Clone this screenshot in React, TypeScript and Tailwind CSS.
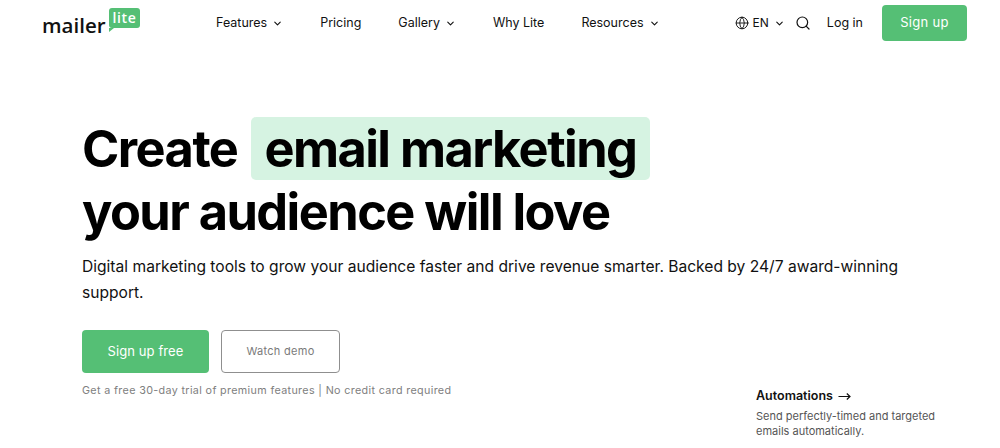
import React from "react";
import { ChevronDown, Globe, Search } from "lucide-react";

const NAV_ITEMS = [
  { label: "Features", caret: true },
  { label: "Pricing", caret: false },
  { label: "Gallery", caret: true },
  { label: "Why Lite", caret: false },
  { label: "Resources", caret: true },
];

const Logo: React.FC = () => (
  <div className="-mt-[7px] flex h-[26px] w-[98px] items-end justify-between">
    <span className="text-[20.5px] leading-[16px] font-['Open_Sans',sans-serif] font-semibold text-[#111]">
      mailer
    </span>
    <div className="relative mb-[5px] flex h-[20px] w-[31px] items-center justify-center rounded-[3px] bg-[#55bf75]">
      <span className="text-[14px] leading-none font-['Open_Sans',sans-serif] font-semibold text-white tracking-[0.7px]">
        lite
      </span>
      <span className="absolute left-0 -bottom-[4px] h-0 w-0 border-t-[4px] border-r-[5px] border-t-[#55bf75] border-r-transparent" />
    </div>
  </div>
);

const App: React.FC = () => {
  return (
    <div className="h-[448px] w-[1000px] overflow-hidden bg-white font-['Inter',sans-serif] text-[#0a0a0a]">
      <header className="flex h-[46px] items-center pl-[42px] pr-[33px]">
        <Logo />
        <nav className="ml-[76px] flex items-center gap-[37px]">
          {NAV_ITEMS.map((item) => (
            <a key={item.label} className="flex items-center gap-[5px] text-[12.5px] text-[#111]">
              {item.label}
              {item.caret && <ChevronDown size={11} strokeWidth={2.4} />}
            </a>
          ))}
        </nav>
        <div className="ml-auto flex items-center">
          <Globe size={14} strokeWidth={1.6} className="text-[#111]" />
          <span className="ml-[4px] text-[12px] text-[#111]">EN</span>
          <ChevronDown size={11} strokeWidth={2.4} className="ml-[5px] text-[#111]" />
          <Search size={16} strokeWidth={1.8} className="ml-[10px] text-[#111]" />
          <a className="ml-[16px] text-[12.5px] text-[#111]">Log in</a>
          <button className="ml-[19px] h-[36px] w-[85px] rounded-[4px] bg-[#55bf75] text-[13px] tracking-[0.3px] text-white">
            Sign up
          </button>
        </div>
      </header>

      <main className="flex pl-[82px]">
        <section className="w-[674px] shrink-0 pt-[71px]">
          <h1 className="text-[50.5px] leading-[63px] font-bold tracking-[-1.55px] text-black">
            <span>Create</span>
            <span className="ml-[14px] inline-block h-[63px] rounded-[5px] bg-[#d6f3e2] pl-[13px] pr-[14px]">
              email marketing
            </span>
            <br />
            your audience will love
          </h1>
          <p className="mt-[11px] w-[860px] text-[15.6px] leading-[26px] text-[#111]">
            Digital marketing tools to grow your audience faster and drive revenue smarter. Backed by 24/7
            award-winning support.
          </p>
          <div className="mt-[24px] flex gap-[12px]">
            <button className="h-[43px] w-[127px] rounded-[4px] bg-[#55bf75] text-[13px] tracking-[0.1px] text-white">
              Sign up free
            </button>
            <button className="h-[43px] w-[119px] rounded-[4px] border border-[#8f8f8f] text-[11px] tracking-[0.3px] text-[#7a7a7a]">
              Watch demo
            </button>
          </div>
          <p className="mt-[10px] text-[10.75px] tracking-[0.35px] text-[#808080]">
            Get a free 30-day trial of premium features | No credit card required
          </p>
        </section>
        <aside className="pt-[341px]">
          <h3 className="flex items-center gap-[5px] text-[12.5px] font-semibold text-[#111]">
            Automations
            <svg width="13" height="9" viewBox="0 0 13 9" fill="none" stroke="currentColor" strokeWidth="1.2">
              <path d="M0.5 4.5H12M8.8 1.5L12 4.5L8.8 7.5" />
            </svg>
          </h3>
          <p className="mt-[3px] w-[200px] text-[11px] leading-[15px] text-[#555]">
            Send perfectly-timed and targeted emails automatically.
          </p>
        </aside>
      </main>
    </div>
  );
};

export default App;
